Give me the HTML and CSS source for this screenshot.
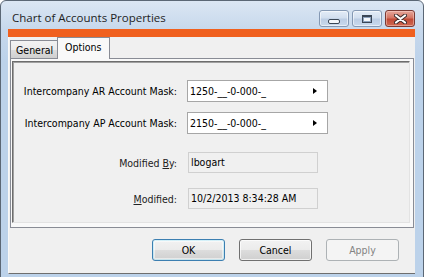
FILE: index.html
```html
<!DOCTYPE html>
<html>
<head>
<meta charset="utf-8">
<title>Chart of Accounts Properties</title>
<link rel="stylesheet" href="styles.css">
</head>
<body>
<div class="window">
  <div class="titlebar">
    <span class="title">Chart of Accounts Properties</span>
    <div class="caption-buttons">
      <div class="cbtn"><span class="min-icon"></span></div>
      <div class="cbtn"><span class="max-icon"></span></div>
      <div class="cbtn close">
        <svg width="13" height="10" viewBox="0 0 13 10">
          <path d="M2 1.5 L11 8.5 M11 1.5 L2 8.5" stroke="#3b2a2a" stroke-width="4" stroke-linecap="round"/>
          <path d="M2 1.5 L11 8.5 M11 1.5 L2 8.5" stroke="#ffffff" stroke-width="2.2" stroke-linecap="round"/>
        </svg>
      </div>
    </div>
  </div>
  <div class="client">
    <div class="accent"></div>
    <div class="tabs">
      <div class="tab">General</div>
      <div class="tab active">Options</div>
    </div>
    <div class="panel">
      <div class="box">
        <div class="row row-ar">
          <span class="label">Intercompany AR Account Mask:</span>
          <div class="mask">1250-__-0-000-_<span class="arrow"></span></div>
        </div>
        <div class="row row-ap">
          <span class="label">Intercompany AP Account Mask:</span>
          <div class="mask">2150-__-0-000-_<span class="arrow"></span></div>
        </div>
        <div class="row row-by">
          <span class="label">Modified <u>B</u>y:</span>
          <div class="readonly">lbogart</div>
        </div>
        <div class="row row-mod">
          <span class="label"><u>M</u>odified:</span>
          <div class="readonly">10/2/2013 8:34:28 AM</div>
        </div>
      </div>
    </div>
    <div class="buttons">
      <div class="btn default">OK</div>
      <div class="btn">Cancel</div>
      <div class="btn disabled">Apply</div>
    </div>
  </div>
</div>
</body>
</html>
```

FILE: styles.css
```css
html, body {
  margin: 0;
  padding: 0;
  width: 424px;
  height: 277px;
  overflow: hidden;
  background: #ffffff;
}

.window {
  box-sizing: border-box;
  width: 424px;
  height: 280px;
  border: 1px solid #5b6775;
  border-radius: 6px 6px 0 0;
  background: linear-gradient(to bottom, #dbe6f3 0px, #c7d8ec 28px, #bcd2ea 60px, #bcd2ea 100%);
  padding: 0 8px 0 7px;
  font-family: "DejaVu Sans Condensed", "DejaVu Sans", sans-serif;
  font-size: 10.5px;
  color: #000;
}

.titlebar {
  height: 28px;
  display: flex;
  align-items: flex-start;
}

.title {
  font-family: "Open Sans", "Noto Sans", sans-serif;
  font-size: 11.5px;
  color: #1e1e1e;
  margin-left: 4px;
  margin-top: 9px;
  line-height: 16px;
}

.caption-buttons {
  margin-left: auto;
  margin-top: 9px;
  margin-right: 0;
  display: flex;
  gap: 3px;
}

.cbtn {
  box-sizing: border-box;
  width: 30px;
  height: 17px;
  border: 1px solid #8498b3;
  border-radius: 3px;
  background: linear-gradient(to bottom, #e3ecf7 0%, #d2dfef 45%, #bccde4 55%, #c9d9ec 100%);
  box-shadow: inset 0 0 0 1px rgba(255,255,255,0.55);
  display: flex;
  align-items: center;
  justify-content: center;
  position: relative;
}

.cbtn.close {
  border-color: #7a3a34;
  background: linear-gradient(to bottom, #e6a79b 0%, #d47564 45%, #c14a36 55%, #cf6a52 100%);
  box-shadow: inset 0 0 0 1px rgba(255,220,210,0.45);
}

.min-icon {
  width: 10px;
  height: 3px;
  margin-top: 6px;
  border: 1px solid #3a4656;
  border-radius: 2px;
  background: #f4f7fb;
}

.max-icon {
  box-sizing: border-box;
  width: 10px;
  height: 8px;
  border: 1px solid #3a4656;
  border-top-width: 2px;
  background: #f4f7fb;
  box-shadow: inset 0 0 0 1px #8ea2bd;
}

.client {
  box-sizing: border-box;
  height: 245px;
  background: #f0f0f0;
  border-left: 1px solid #f8f8f8;
  border-bottom: 1px solid #6e6e6e;
  display: flex;
  flex-direction: column;
}

.accent {
  height: 8px;
  margin-left: -1px;
  background: #f0601e;
}

.tabs {
  display: flex;
  align-items: flex-end;
  height: 21px;
  margin-left: 1px;
  position: relative;
  z-index: 1;
}

.tab {
  box-sizing: border-box;
  height: 18px;
  padding: 0 5px 0 5px;
  border: 1px solid #898c95;
  border-bottom: none;
  background: linear-gradient(to bottom, #f2f2f2 0%, #ebebeb 50%, #dddddd 51%, #cfcfcf 100%);
  line-height: 18px;
  width: 48px;
  margin-bottom: 0;
}

.tab.active {
  width: 53px;
  height: 22px;
  margin-left: -1px;
  margin-bottom: -1px;
  background: #f9f9f9;
  line-height: 19px;
  padding-left: 7px;
}

.panel {
  box-sizing: border-box;
  margin: 0 1px 0 1px;
  height: 170px;
  border: 1px solid #898c95;
  background: #f9f9f9;
  padding: 2px 3px 0 1px;
}

.box {
  box-sizing: border-box;
  height: 162px;
  border: 1px solid #a0a0a0;
  border-top-color: #6d6d6d;
  border-left-color: #6d6d6d;
  border-right-color: #e3e3e3;
  border-bottom-color: #e3e3e3;
  box-shadow: inset 1px 1px 0 #a0a0a0;
  background: #f0f0f0;
  padding-top: 18px;
}

.row {
  display: flex;
  align-items: center;
  height: 21px;
}

.row-ap { margin-top: 11px; }
.row-by { margin-top: 19px; }
.row-mod { margin-top: 15px; }

.label {
  width: 164px;
  text-align: right;
  margin-right: 10px;
  white-space: nowrap;
}

.row-by .label, .row-mod .label {
  color: #222;
}

.mask {
  box-sizing: border-box;
  width: 141px;
  height: 22px;
  border: 1px solid #a6a6a6;
  background: #ffffff;
  padding-left: 2px;
  line-height: 20px;
  position: relative;
}

.arrow {
  position: absolute;
  right: 10px;
  top: 7px;
  width: 0;
  height: 0;
  border-top: 3.5px solid transparent;
  border-bottom: 3.5px solid transparent;
  border-left: 4px solid #000;
}

.readonly {
  box-sizing: border-box;
  width: 130px;
  height: 21px;
  margin-left: 1px;
  border: 1px solid #d0d0d0;
  background: #f0f0f0;
  padding-left: 2px;
  line-height: 19px;
}

.buttons {
  display: flex;
  justify-content: flex-end;
  gap: 14px;
  margin-top: 11px;
  padding-right: 16px;
}

.btn {
  box-sizing: border-box;
  width: 73px;
  height: 22px;
  border: 1px solid #707070;
  border-radius: 3px;
  background: linear-gradient(to bottom, #f2f2f2 0%, #ebebeb 50%, #dddddd 51%, #cfcfcf 100%);
  box-shadow: inset 0 0 0 1px rgba(255,255,255,0.7);
  text-align: center;
  line-height: 20px;
}

.btn.default {
  border-color: #3c7fb1;
  box-shadow: inset 0 0 0 1px #48d3fb33, inset 0 0 0 2px rgba(255,255,255,0.5);
}

.btn.disabled {
  border-color: #adb2b5;
  background: #f4f4f4;
  color: #838383;
  box-shadow: none;
}
```
